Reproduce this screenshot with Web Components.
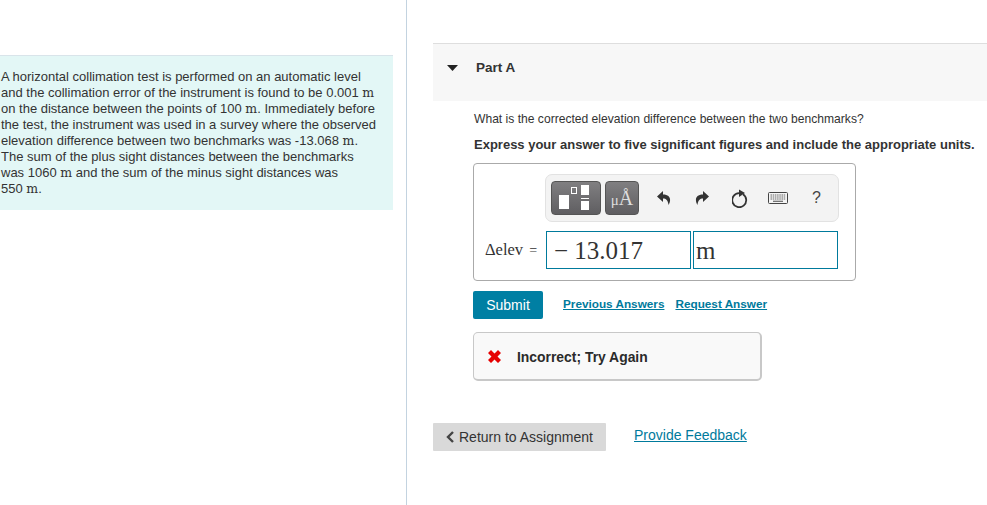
<!DOCTYPE html>
<html lang="en">
<head>
<meta charset="utf-8">
<title>Part A</title>
<style>
  html, body { margin: 0; padding: 0; background: #fff; }
  body { font-family: "Liberation Sans", Arial, sans-serif; color: #333; height: 505px; overflow: hidden; }
</style>
</head>
<body>
<mp-page>
  <mp-problem slot="left">
    A horizontal collimation test is performed on an automatic level<br>
    and the collimation error of the instrument is found to be 0.001 <mp-unit>m</mp-unit><br>
    on the distance between the points of 100 <mp-unit>m</mp-unit>. Immediately before<br>
    the test, the instrument was used in a survey where the observed<br>
    elevation difference between two benchmarks was -13.068 <mp-unit>m</mp-unit>.<br>
    The sum of the plus sight distances between the benchmarks<br>
    was 1060 <mp-unit>m</mp-unit> and the sum of the minus sight distances was<br>
    550 <mp-unit>m</mp-unit>.
  </mp-problem>
  <mp-part slot="right" title="Part A">
    <mp-question>
      <span>What is the corrected elevation difference between the two benchmarks?</span>
      <b slot="hint">Express your answer to five significant figures and include the appropriate units.</b>
    </mp-question>
    <mp-answer-box value="− 13.017" unit="m"></mp-answer-box>
    <mp-actions></mp-actions>
    <mp-feedback>Incorrect; Try Again</mp-feedback>
  </mp-part>
  <mp-footer slot="right"></mp-footer>
</mp-page>

<script>
const FONT = `"Liberation Sans", Arial, sans-serif`

class Page extends HTMLElement {
  constructor() {
    super();
    this.attachShadow({ mode: 'open' }).innerHTML = /*html*/ `
    <style>
      :host { display: grid; grid-template-columns: 407px 1fr; height: 505px; }
      .left { border-right: 1px solid #c3d3e0; padding-top: 55px; }
      .right { padding: 43px 0 0 26px; }
    </style>
    <div class="left"><slot name="left"></slot></div>
    <div class="right"><slot name="right"></slot></div>`;
  }
}
customElements.define("mp-page", Page);

class Problem extends HTMLElement {
  constructor() {
    super();
    this.attachShadow({ mode: 'open' }).innerHTML = /*html*/ `
    <style>
      :host {
        display: block;
        box-sizing: border-box;
        width: 393px;
        height: 155px;
        padding: 13px 0 0 1px;
        background: #e3f7f6;
        border-top: 1px solid #d9e4ea;
        font: 13px/16px ${FONT};
        color: #333;
        white-space: nowrap;
      }
    </style>
    <slot></slot>`;
  }
}
customElements.define("mp-problem", Problem);

class Unit extends HTMLElement {
  constructor() {
    super();
    this.attachShadow({ mode: 'open' }).innerHTML = /*html*/ `
    <style>:host { font-family: "DejaVu Serif", "Liberation Serif", serif; font-size: 12.5px; }</style>
    <slot></slot>`;
  }
}
customElements.define("mp-unit", Unit);

class Part extends HTMLElement {
  constructor() {
    super();
    this.attachShadow({ mode: 'open' }).innerHTML = /*html*/ `
    <style>
      :host { display: block; }
      header {
        box-sizing: border-box;
        height: 58px;
        display: flex;
        align-items: flex-start;
        padding: 16px 0 0 14px;
        background: #f7f7f7;
        border-top: 1px solid #dedede;
      }
      .arrow { width: 11px; height: 6px; margin: 5px 18px 0 0; fill: #222; }
      h2 { margin: 0; font: bold 13.5px/15px ${FONT}; color: #333; }
      .body { padding-left: 40px; }
    </style>
    <header>
      <svg class="arrow" viewBox="0 0 11 6"><path d="M0 0H11L5.5 6Z"/></svg>
      <h2></h2>
    </header>
    <div class="body"><slot></slot></div>`;
  }
  connectedCallback() {
    this.shadowRoot.querySelector("h2").textContent = this.getAttribute("title");
  }
}
customElements.define("mp-part", Part);

class Question extends HTMLElement {
  constructor() {
    super();
    this.attachShadow({ mode: 'open' }).innerHTML = /*html*/ `
    <style>
      :host { display: flex; flex-direction: column; gap: 10px; padding: 11px 0 0 1px; font: 12.1px/15px ${FONT}; color: #333; white-space: nowrap; }
      .hint { font-size: 13px; }
    </style>
    <div><slot></slot></div>
    <div class="hint"><slot name="hint"></slot></div>`;
  }
}
customElements.define("mp-question", Question);

class AnswerBox extends HTMLElement {
  constructor() {
    super();
    this.attachShadow({ mode: 'open' }).innerHTML = /*html*/ `
    <style>
      :host {
        display: block;
        box-sizing: border-box;
        width: 383px;
        height: 118px;
        margin-top: 11px;
        padding: 10px 17px 0 0;
        border: 1px solid #aaa;
        border-radius: 4px;
      }
      .tools { margin-left: 71px; }
      .row { display: flex; align-items: center; margin-top: 9px; height: 38px; }
      .label {
        width: 72px;
        box-sizing: border-box;
        padding: 0 0 1px 11px;
        font: 16.5px "Liberation Serif", serif;
        color: #333;
        white-space: nowrap;
      }
      .label small { font-size: 14px; margin-left: 2px; }
      .field {
        box-sizing: border-box;
        width: 145px;
        height: 38px;
        border: 1px solid #007a9c;
        font: 25px/37px "Liberation Serif", serif;
        color: #333;
        padding-left: 7px;
        white-space: pre;
      }
      .unit { margin-left: 2px; padding-left: 2px; }
    </style>
    <div class="tools"><mp-toolbar></mp-toolbar></div>
    <div class="row">
      <div class="label">Δelev <small>=</small></div>
      <div class="field value"></div>
      <div class="field unit"></div>
    </div>`;
  }
  connectedCallback() {
    this.shadowRoot.querySelector(".value").textContent = this.getAttribute("value");
    this.shadowRoot.querySelector(".unit").textContent = this.getAttribute("unit");
  }
}
customElements.define("mp-answer-box", AnswerBox);

class Toolbar extends HTMLElement {
  constructor() {
    super();
    this.attachShadow({ mode: 'open' }).innerHTML = /*html*/ `
    <style>
      :host {
        display: flex;
        align-items: center;
        box-sizing: border-box;
        width: 294px;
        height: 48px;
        padding: 0 5px;
        background: #f3f3f3;
        border: 1px solid #e2e2e2;
        border-radius: 7px;
      }
      .btn {
        box-sizing: border-box;
        height: 34px;
        display: flex;
        align-items: center;
        justify-content: center;
        border: 1px solid #555;
        border-radius: 4px;
        background: linear-gradient(#807f81, #5f5e61);
      }
      .tpl { width: 50px; margin-right: 4px; }
      .sym { width: 34px; color: #dedede; font-family: "Liberation Serif", serif; align-items: baseline; padding-top: 5px; }
      .sym .mu { font-size: 15px; }
      .sym .ang { font-size: 20px; }
      svg { display: block; flex: none; }
      .icon { fill: #333; }
      .undo { margin-left: 18px; }
      .redo { margin-left: 24px; }
      .reset { margin-left: 23px; }
      .keys { margin-left: 19px; }
      .help { margin-left: 24px; font: 16px/20px ${FONT}; color: #444; }
    </style>
    <div class="btn tpl">
      <svg width="34" height="26" viewBox="0 0 34 26">
        <rect x="0" y="10" width="10" height="14" fill="#fff"/>
        <rect x="12.500" y="2.500" width="5" height="6" fill="none" stroke="#fff"/>
        <rect x="22" y="0" width="8" height="10" fill="#fff"/>
        <rect x="22" y="13" width="8" height="1" fill="#fff"/>
        <rect x="22" y="16" width="8" height="9" fill="#fff"/>
      </svg>
    </div>
    <div class="btn sym"><span class="mu">μ</span><span class="ang">Å</span></div>
    <svg class="icon undo" width="14" height="16" viewBox="0 0 14 16">
      <path d="M6 1 0 6.500 6 12V8.500C9 8.500 11 10 11.500 15 14.500 10 13.500 4.500 6 4.500Z"/>
    </svg>
    <svg class="icon redo" width="14" height="16" viewBox="0 0 14 16">
      <path d="M8 1 14 6.500 8 12V8.500C5 8.500 3 10 2.500 15-.5 10 .5 4.500 8 4.500Z"/>
    </svg>
    <svg class="reset" width="17" height="19" viewBox="0 0 17 19">
      <path d="M11 5.300A7 7 0 1 1 7 4.200" fill="none" stroke="#333" stroke-width="1.800"/>
      <path d="M7 0.500 13 4 7 8Z" fill="#333"/>
    </svg>
    <svg class="keys" width="20" height="12" viewBox="0 0 20 12">
      <rect x=".5" y=".5" width="19" height="11" rx="1" fill="#f4f4f4" stroke="#444"/>
      <path d="M2.500 3H17.500M2.500 5H17.500M2.500 7H17.500" stroke="#666" stroke-dasharray="1.500 .7"/>
      <path d="M5 9.300H15" stroke="#666" stroke-width="1.200"/>
    </svg>
    <div class="help">?</div>`;
  }
}
customElements.define("mp-toolbar", Toolbar);

class Actions extends HTMLElement {
  constructor() {
    super();
    this.attachShadow({ mode: 'open' }).innerHTML = /*html*/ `
    <style>
      :host { display: flex; align-items: flex-start; margin-top: 10px; font-family: ${FONT}; }
      button {
        width: 70px;
        height: 28px;
        border: 0;
        border-radius: 2px;
        background: #007fa3;
        color: #fff;
        font: 14px ${FONT};
        padding: 0;
      }
      a { color: #007a9c; font: bold 11.750px/14px ${FONT}; text-decoration: underline; margin-top: 6px; white-space: nowrap; }
      .prev { margin-left: 20px; }
      .req { margin-left: 11px; }
    </style>
    <button>Submit</button>
    <a class="prev" href="#">Previous Answers</a>
    <a class="req" href="#">Request Answer</a>`;
  }
}
customElements.define("mp-actions", Actions);

class Feedback extends HTMLElement {
  constructor() {
    super();
    this.attachShadow({ mode: 'open' }).innerHTML = /*html*/ `
    <style>
      :host {
        display: flex;
        align-items: center;
        box-sizing: border-box;
        width: 289px;
        height: 49px;
        margin-top: 13px;
        padding: 1px 0 0 14px;
        background: #f9f9f9;
        border: 1px solid #c8c8c8;
        border-bottom-width: 2px;
        border-right-width: 2px;
        border-radius: 5px;
        font: bold 13.900px ${FONT};
        color: #2b2b2b;
      }
      svg { margin-right: 16px; }
    </style>
    <svg width="13" height="13" viewBox="0 0 13 13">
      <path d="M3 0 6.500 3.500 10 0 13 3 9.500 6.500 13 10 10 13 6.500 9.500 3 13 0 10 3.500 6.500 0 3Z" fill="#e60000"/>
    </svg>
    <slot></slot>`;
  }
}
customElements.define("mp-feedback", Feedback);

class Footer extends HTMLElement {
  constructor() {
    super();
    this.attachShadow({ mode: 'open' }).innerHTML = /*html*/ `
    <style>
      :host { display: flex; align-items: flex-start; margin-top: 42px; font-family: ${FONT}; }
      .back {
        display: flex;
        align-items: center;
        box-sizing: border-box;
        width: 173px;
        height: 28px;
        padding-left: 13px;
        background: #d9d9d9;
        border-radius: 1px;
        font-size: 14px;
        color: #333;
        white-space: nowrap;
      }
      .back svg { margin-right: 4px; }
      a { margin: 4px 0 0 28px; color: #007a9c; font-size: 14px; line-height: 16px; text-decoration: underline; }
    </style>
    <div class="back">
      <svg width="9" height="12" viewBox="0 0 9 12"><path d="M7 1 2 6 7 11" fill="none" stroke="#444" stroke-width="2.400"/></svg>
      Return to Assignment
    </div>
    <a href="#">Provide Feedback</a>`;
  }
}
customElements.define("mp-footer", Footer);
</script>
</body>
</html>
